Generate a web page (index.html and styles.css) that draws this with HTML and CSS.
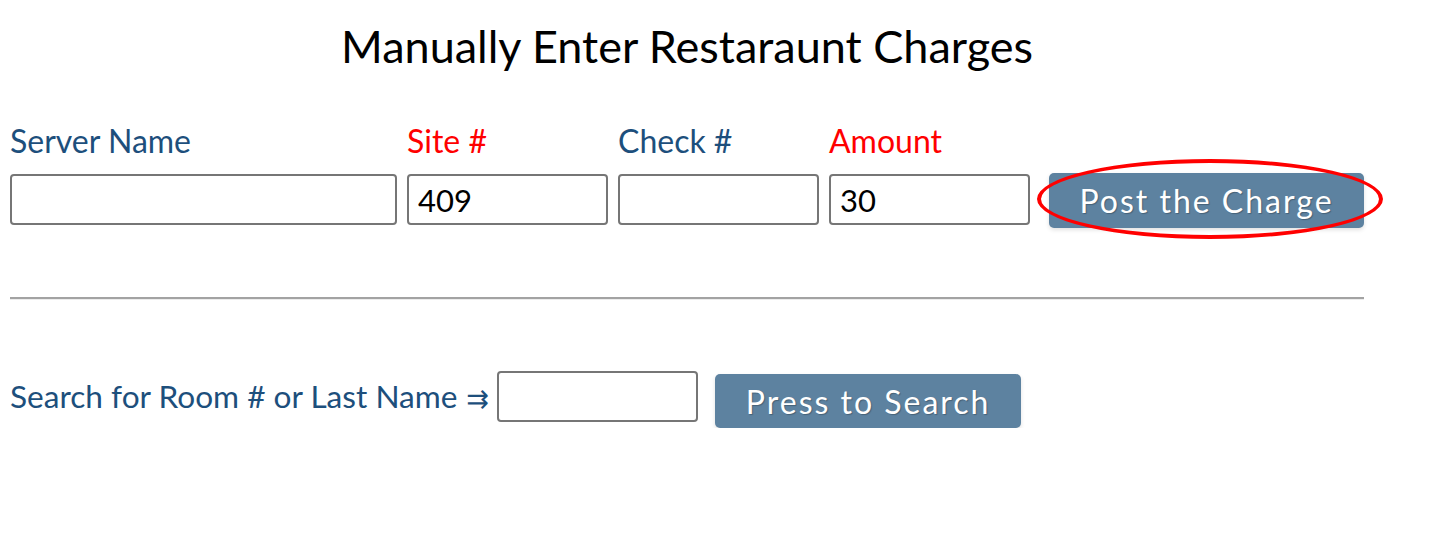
FILE: index.html
```html
<!DOCTYPE html>
<html lang="en">
<head>
    <meta charset="UTF-8">
    <meta name="viewport" content="width=device-width, initial-scale=1.0">
    <title>Restaurant Charges</title>
    <link rel="stylesheet" href="styles.css">
</head>
<body>

    <div class="container">
        <h1 class="title">Manually Enter Restaraunt Charges</h1>

        <form class="charge-form" onsubmit="return false;">
            <label class="field-label" for="serverName">Server Name</label>
            <label class="field-label required" for="siteNum">Site #</label>
            <label class="field-label" for="checkNum">Check #</label>
            <label class="field-label required" for="amount">Amount</label>
            <span></span>

            <input type="text" id="serverName" class="field-input">
            <input type="text" id="siteNum" class="field-input" value="409">
            <input type="text" id="checkNum" class="field-input">
            <input type="text" id="amount" class="field-input" value="30">
            <div class="post-wrap">
                <button type="submit" class="button post-button">Post the Charge</button>
                <span class="callout"></span>
            </div>
        </form>

        <hr class="divider">

        <form class="search-row" onsubmit="return false;">
            <label class="search-label" for="searchInput">Search for Room # or Last Name <span class="arrow">&#8649;</span></label>
            <input type="text" id="searchInput" class="search-input">
            <button type="submit" class="button search-button">Press to Search</button>
        </form>
    </div>

</body>
</html>
```

FILE: styles.css
```css
    body {
        font-family: 'Lato', 'Liberation Sans', sans-serif;
        background-color: #ffffff;
        color: #000000;
        margin: 0;
        padding: 0;
    }
    .container {
        width: 1354px;
        margin-left: 10px;
    }
    .title {
        font-size: 45px;
        font-weight: normal;
        text-align: center;
        line-height: 53px;
        margin: 20px 0 0 0;
    }
    .charge-form {
        display: grid;
        grid-template-columns: 387px 201px 201px 201px 1fr;
        column-gap: 10px;
        margin-top: 49px;
    }
    .field-label {
        font-size: 32px;
        line-height: 38px;
        color: #1d4f7c;
        margin-bottom: 14px;
    }
    .field-label.required {
        color: #ff0000;
    }
    .field-input {
        box-sizing: border-box;
        align-self: start;
        width: 100%;
        height: 51px;
        border: 2px solid #767676;
        border-radius: 4px;
        padding: 0 9px;
        font-family: 'Lato', sans-serif;
        font-size: 31px;
        color: #000000;
    }
    .post-wrap {
        position: relative;
        align-self: start;
        margin-top: -1px;
        margin-left: 9px;
        width: 315px;
    }
    .button {
        background-color: #5d82a0;
        color: #ffffff;
        border: none;
        border-radius: 5px;
        font-family: 'Lato', sans-serif;
        font-size: 32px;
        letter-spacing: 2px;
        text-shadow: 1px 1px 1px rgba(0, 0, 0, 0.25);
        box-shadow: 0px 2px 4px rgba(0, 0, 0, 0.12);
        cursor: pointer;
    }
    .post-button {
        display: block;
        width: 315px;
        height: 55px;
    }
    /* red circle drawn round the button */
    .callout {
        position: absolute;
        left: -12px;
        top: -14px;
        width: 338px;
        height: 72px;
        border: 4px solid #ff0000;
        border-radius: 50%;
        pointer-events: none;
    }
    .divider {
        border: none;
        border-top: 2px solid #a3a3a3;
        border-bottom: 1px solid #ececec;
        margin: 69px 0 0 0;
    }
    .search-row {
        display: flex;
        align-items: flex-start;
        margin-top: 71px;
    }
    .search-label {
        font-size: 31.6px;
        line-height: 38px;
        color: #1d4f7c;
        margin-top: 6px;
        margin-right: 8px;
        white-space: nowrap;
    }
    .arrow {
        font-family: 'DejaVu Sans', sans-serif;
        font-size: 27px;
        margin-left: 1px;
    }
    .search-input {
        box-sizing: border-box;
        width: 201px;
        height: 51px;
        border: 2px solid #767676;
        border-radius: 4px;
        font-size: 31px;
    }
    .search-button {
        width: 306px;
        height: 54px;
        margin-top: 3px;
        margin-left: 17px;
    }
```
